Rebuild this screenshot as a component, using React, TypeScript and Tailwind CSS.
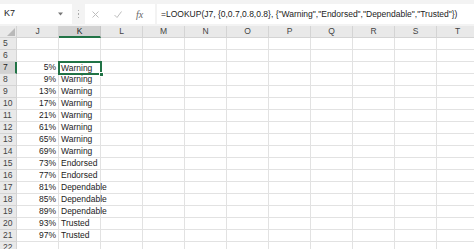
const rows: [number, string, string][] = [
  [5, "", ""],
  [6, "", ""],
  [7, "5%", "Warning"],
  [8, "9%", "Warning"],
  [9, "13%", "Warning"],
  [10, "17%", "Warning"],
  [11, "21%", "Warning"],
  [12, "61%", "Warning"],
  [13, "65%", "Warning"],
  [14, "69%", "Warning"],
  [15, "73%", "Endorsed"],
  [16, "77%", "Endorsed"],
  [17, "81%", "Dependable"],
  [18, "85%", "Dependable"],
  [19, "89%", "Dependable"],
  [20, "93%", "Trusted"],
  [21, "97%", "Trusted"],
  [22, "", ""],
];

const cols = ["J", "K", "L", "M", "N", "O", "P", "Q", "R", "S", "T"];

export default function App() {
  return (
    <div className="w-[474px] h-[249px] overflow-hidden bg-[#f3f3f3] font-['Liberation_Sans',sans-serif] text-[#222]">
      {/* Formula bar */}
      <div className="flex h-[20px] mt-[4px] items-stretch">
        <div className="flex w-[72px] shrink-0 items-center justify-between bg-white pl-[4px] pr-[9px] text-[9px]">
          <span>K7</span>
          <svg width="5" height="4" viewBox="0 0 5 4">
            <path d="M0 0.5 L5 0.5 L2.5 3.5 Z" fill="#777" />
          </svg>
        </div>
        <div className="flex w-[13px] shrink-0 flex-col items-center justify-center gap-[2px]">
          <span className="h-[1.5px] w-[1.5px] bg-[#aaa]" />
          <span className="h-[1.5px] w-[1.5px] bg-[#aaa]" />
          <span className="h-[1.5px] w-[1.5px] bg-[#aaa]" />
        </div>
        <div className="flex w-[70px] shrink-0 items-center bg-white">
          <svg width="7" height="7" viewBox="0 0 7 7" className="ml-[7px]">
            <path d="M0.5 0.5 L6.5 6.5 M6.5 0.5 L0.5 6.5" stroke="#bdbdbd" strokeWidth="1" />
          </svg>
          <svg width="8" height="7" viewBox="0 0 8 7" className="ml-[15px]">
            <path d="M0.5 4 L3 6.5 L7.5 0.5" stroke="#bdbdbd" strokeWidth="1" fill="none" />
          </svg>
          <span className="ml-[14px] font-['Liberation_Serif',serif] italic text-[10px] text-[#666]">
            fx
          </span>
        </div>
        <div className="ml-[2px] flex min-w-0 flex-1 items-center overflow-hidden bg-white pl-[4px] text-[8.5px] whitespace-nowrap">
          =LOOKUP(J7, {"{"}0,0.7,0.8,0.8{"}"}, {"{"}"Warning","Endorsed","Dependable","Trusted"{"}"})
        </div>
      </div>

      {/* Grid */}
      <div className="mt-[2px] grid grid-cols-[17px_repeat(11,42px)] bg-white text-[8.5px]">
        {/* header */}
        <div className="relative h-[12px] border-r border-b border-[#d4d4d4] bg-[#e9e9e9]">
          <svg width="8" height="8" viewBox="0 0 8 8" className="absolute right-[1px] bottom-[1px]">
            <path d="M8 0 L8 8 L0 8 Z" fill="#b9b9b9" />
          </svg>
        </div>
        {cols.map((c) => (
          <div
            key={c}
            className={
              c === "K"
                ? "flex h-[12px] items-center justify-center border-r border-b-2 border-r-[#c6c6c6] border-b-[#217346] bg-[#d2d2d2] text-[#222]"
                : "flex h-[12px] items-center justify-center border-r border-b border-[#d4d4d4] bg-[#e9e9e9] text-[#444]"
            }
          >
            {c}
          </div>
        ))}

        {rows.map(([n, pct, label]) => (
          <Row key={n} n={n} pct={pct} label={label} />
        ))}
      </div>
    </div>
  );
}

function Row({ n, pct, label }: { n: number; pct: string; label: string }) {
  const selected = n === 7;
  return (
    <>
      <div
        className={
          selected
            ? "flex h-[12px] items-center border-r-2 border-b border-r-[#217346] border-b-[#d4d4d4] bg-[#d2d2d2] pl-[3px] text-[#222]"
            : "flex h-[12px] items-center border-r border-b border-[#d4d4d4] bg-[#e9e9e9] pl-[3px] text-[#444]"
        }
      >
        {n}
      </div>
      <div className="flex h-[12px] items-center justify-end border-r border-b border-[#e2e2e2] pr-[2px]">
        {pct}
      </div>
      <div
        className={
          selected
            ? "relative z-10 flex h-[12px] items-center pl-[2px] outline-2 -outline-offset-1 outline-[#217346]"
            : "flex h-[12px] items-center border-r border-b border-[#e2e2e2] pl-[2px] whitespace-nowrap"
        }
      >
        {label}
        {selected && (
          <span className="absolute right-[-3px] bottom-[-3px] h-[5px] w-[5px] border border-white bg-[#217346]" />
        )}
      </div>
      {cols.slice(2).map((c) => (
        <div key={c} className="h-[12px] border-r border-b border-[#e2e2e2]" />
      ))}
    </>
  );
}
